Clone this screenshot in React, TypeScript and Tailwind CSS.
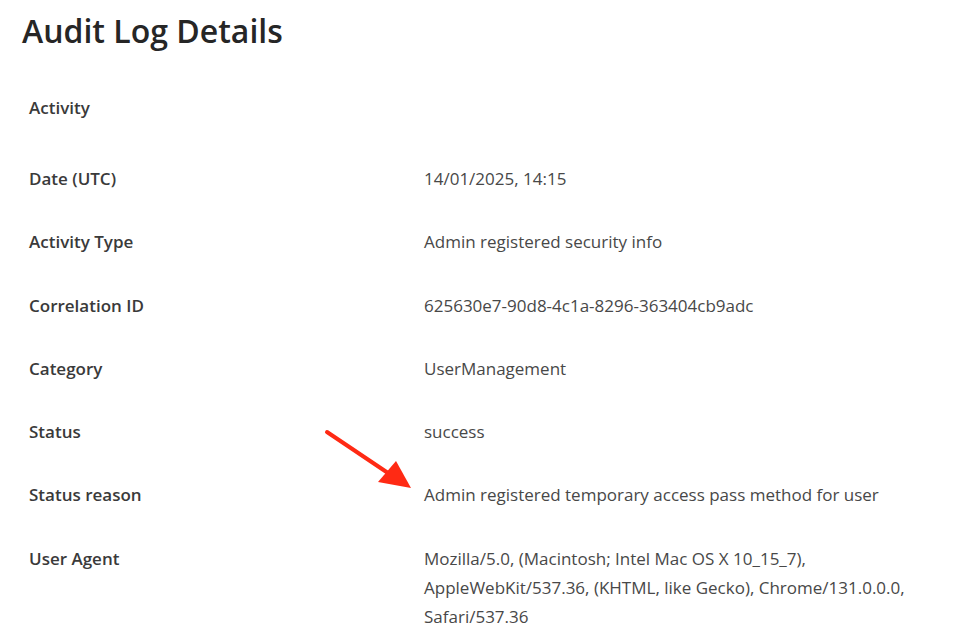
const ROWS: { label: string; value: string[] }[] = [
  { label: 'Date (UTC)', value: ['14/01/2025, 14:15'] },
  { label: 'Activity Type', value: ['Admin registered security info'] },
  { label: 'Correlation ID', value: ['625630e7-90d8-4c1a-8296-363404cb9adc'] },
  { label: 'Category', value: ['UserManagement'] },
  { label: 'Status', value: ['success'] },
  { label: 'Status reason', value: ['Admin registered temporary access pass method for user'] },
  {
    label: 'User Agent',
    value: [
      'Mozilla/5.0, (Macintosh; Intel Mac OS X 10_15_7),',
      'AppleWebKit/537.36, (KHTML, like Gecko), Chrome/131.0.0.0,',
      'Safari/537.36',
    ],
  },
]

function Arrow() {
  return (
    <svg className="absolute left-[320px] top-[425px]" width="100" height="70" viewBox="0 0 100 70">
      <line x1="7" y1="7" x2="68" y2="48" stroke="#ff2a14" strokeWidth="4" strokeLinecap="round" />
      <polygon points="91,63 58,57 76,36" fill="#ff2a14" />
    </svg>
  )
}

export default function App() {
  return (
    <div
      className="relative min-h-screen bg-white text-[#333]"
      style={{ fontFamily: '"Open Sans", "Noto Sans", sans-serif' }}
    >
      <h1 className="pl-[22px] pt-[11px] text-[32px] leading-[40px] font-semibold text-[#262626]">
        Audit Log Details
      </h1>

      <div className="pl-[29px] mt-[25px]">
        <div className="pt-[17px] pb-[25px] leading-[29px] text-[17px] font-semibold text-[#3a3a3a]">Activity</div>
        {ROWS.map((row) => (
          <div key={row.label} className="grid grid-cols-[395px_1fr] py-[17px] leading-[29.3px] text-[17px]">
            <div className="font-semibold text-[#3a3a3a]">{row.label}</div>
            <div className="text-[#484848]">
              {row.value.map((line) => (
                <div key={line}>{line}</div>
              ))}
            </div>
          </div>
        ))}
      </div>

      <Arrow />
    </div>
  )
}
